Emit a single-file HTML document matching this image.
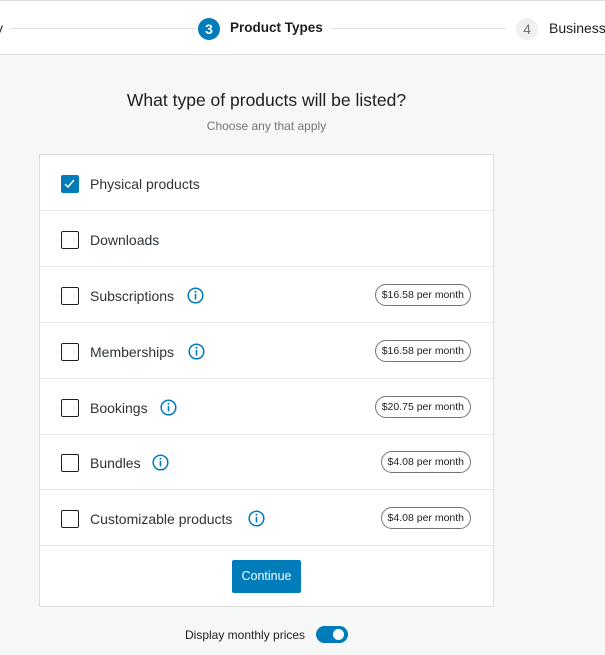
<!DOCTYPE html>
<html><head><style>
*{box-sizing:border-box;margin:0;padding:0}
body{width:605px;height:655px;overflow:hidden;background:#f6f7f7;font-family:"Liberation Sans",sans-serif;color:#1e1e1e;position:relative}
.hdr{position:absolute;left:0;top:0;width:605px;height:55px;background:#fff;border-top:1px solid #ddd;border-bottom:1px solid #ddd}
.ln{position:absolute;top:27px;height:1px;background:#e0e0e0}
.circ{position:absolute;width:22px;height:22px;border-radius:50%;top:17px;text-align:center;line-height:22px;font-size:14px}
.t{position:absolute;top:19px;font-size:14px}
h1{position:absolute;top:90px;left:0;width:533px;text-align:center;font-weight:normal;font-size:17.5px}
.sub{position:absolute;top:119px;left:0;width:533px;text-align:center;font-size:12px;color:#757575}
.card{position:absolute;left:39px;top:154px;width:455px;height:453px;background:#fff;border:1px solid #ddd}
.row{position:absolute;left:0;width:453px;height:56px;border-bottom:1px solid #e8e8e8}
.cb{position:absolute;left:21px;top:20px;width:18px;height:18px;border:1.5px solid #1e1e1e;border-radius:2px}
.cb.on{background:#007cba;border-color:#007cba}
.lb{position:absolute;left:50px;top:21px;font-size:14px;color:#2c3338}
.info{position:absolute;top:20px;width:17px;height:17px}
.pill{position:absolute;right:22px;top:17px;height:22px;border:1px solid #757575;border-radius:11px;font-size:10.5px;line-height:20px;padding:0 6px;color:#1e1e1e}
.btn{position:absolute;left:192px;top:405px;width:69px;height:33px;background:#007cba;color:#fff;border-radius:2px;font-size:12.5px;text-align:center;line-height:33px}
.dm{position:absolute;left:185px;top:628px;font-size:12px}
.tg{position:absolute;left:316px;top:626px;width:32px;height:17px;border-radius:9px;background:#007cba}
.tg:after{content:"";position:absolute;right:4px;top:3px;width:11px;height:11px;border-radius:50%;background:#fff}
</style></head><body>
<div class="hdr">
<div class="t" style="left:-4px">y</div>
<div class="ln" style="left:10px;width:186px"></div>
<div class="circ" style="left:198px;background:#007cba;color:#fff;font-weight:bold">3</div>
<div class="t" style="left:230px;font-weight:bold;font-size:13.5px">Product Types</div>
<div class="ln" style="left:332px;width:175px"></div>
<div class="circ" style="left:516px;background:#f0f0f0;color:#757575">4</div>
<div class="t" style="left:549px">Business</div>
</div>
<h1>What type of products will be listed?</h1>
<div class="sub">Choose any that apply</div>
<div class="card">
<div class="row" style="top:0"><div class="cb on"><svg width="15" height="15" viewBox="0 0 15 15" style="position:absolute;left:0;top:0"><path d="M3 8l3 3 6-7" stroke="#fff" stroke-width="1.5" fill="none"/></svg></div><div class="lb">Physical products</div></div>
<div class="row" style="top:56px"><div class="cb"></div><div class="lb">Downloads</div></div>
<div class="row" style="top:112px"><div class="cb"></div><div class="lb">Subscriptions</div><svg class="info" style="left:147px" viewBox="0 0 17 17"><circle cx="8.5" cy="8.5" r="7.3" stroke="#007cba" stroke-width="1.5" fill="none"/><rect x="7.7" y="7" width="1.6" height="5.5" fill="#007cba"/><circle cx="8.5" cy="4.8" r="1" fill="#007cba"/></svg><div class="pill">$16.58 per month</div></div>
<div class="row" style="top:168px"><div class="cb"></div><div class="lb">Memberships</div><svg class="info" style="left:148px" viewBox="0 0 17 17"><circle cx="8.5" cy="8.5" r="7.3" stroke="#007cba" stroke-width="1.5" fill="none"/><rect x="7.7" y="7" width="1.6" height="5.5" fill="#007cba"/><circle cx="8.5" cy="4.8" r="1" fill="#007cba"/></svg><div class="pill">$16.58 per month</div></div>
<div class="row" style="top:224px"><div class="cb"></div><div class="lb">Bookings</div><svg class="info" style="left:120px" viewBox="0 0 17 17"><circle cx="8.5" cy="8.5" r="7.3" stroke="#007cba" stroke-width="1.5" fill="none"/><rect x="7.7" y="7" width="1.6" height="5.5" fill="#007cba"/><circle cx="8.5" cy="4.8" r="1" fill="#007cba"/></svg><div class="pill">$20.75 per month</div></div>
<div class="row" style="top:279px"><div class="cb"></div><div class="lb">Bundles</div><svg class="info" style="left:112px" viewBox="0 0 17 17"><circle cx="8.5" cy="8.5" r="7.3" stroke="#007cba" stroke-width="1.5" fill="none"/><rect x="7.7" y="7" width="1.6" height="5.5" fill="#007cba"/><circle cx="8.5" cy="4.8" r="1" fill="#007cba"/></svg><div class="pill">$4.08 per month</div></div>
<div class="row" style="top:335px"><div class="cb"></div><div class="lb">Customizable products</div><svg class="info" style="left:208px" viewBox="0 0 17 17"><circle cx="8.5" cy="8.5" r="7.3" stroke="#007cba" stroke-width="1.5" fill="none"/><rect x="7.7" y="7" width="1.6" height="5.5" fill="#007cba"/><circle cx="8.5" cy="4.8" r="1" fill="#007cba"/></svg><div class="pill">$4.08 per month</div></div>
<div class="btn">Continue</div>
</div>
<div class="dm">Display monthly prices</div>
<div class="tg"></div>
</body></html>
